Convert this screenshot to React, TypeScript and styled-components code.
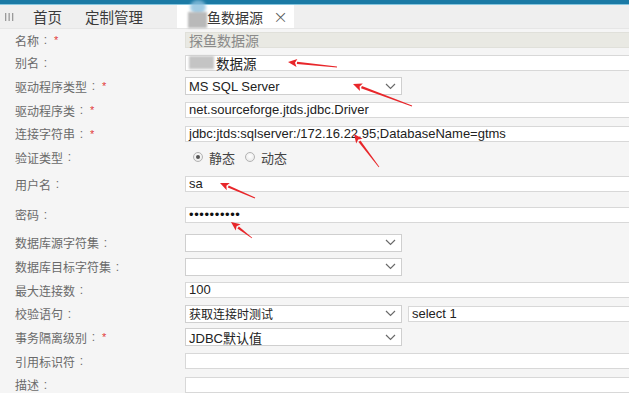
import React from "react";
import styled, { createGlobalStyle } from "styled-components";

const GlobalStyle = createGlobalStyle`
  html, body { margin: 0; padding: 0; background: #f5f5f5; }
  body { font-family: "Liberation Sans", "Noto Sans CJK SC", sans-serif; }
  * { box-sizing: border-box; }
`;

const Page = styled.div`
  position: relative;
  width: 629px;
  height: 393px;
  overflow: hidden;
  background: #f5f5f5;
`;

const TopStripe = styled.div`
  height: 5px;
  background: #1b7aa5;
  border-bottom: 1px solid #86c6df;
`;

const TabBar = styled.div`
  display: flex;
  align-items: stretch;
  height: 24px;
  background: #efefef;
  border-bottom: 1px solid #e6e6e6;
  padding-left: 5px;
`;

const MenuIcon = styled.div`
  width: 28px;
  display: flex;
  align-items: center;
`;

const Tab = styled.div<{ $w: number }>`
  width: ${(p) => p.$w}px;
  display: flex;
  align-items: center;
  font-size: 14.5px;
  color: #3a3a3a;
  font-family: "Noto Sans CJK SC", sans-serif;
`;

const ActiveTab = styled.div`
  position: relative;
  width: 117px;
  display: flex;
  align-items: center;
  padding-left: 11px;
  background: #fff;
  font-size: 14px;
  color: #3a3a3a;
  font-family: "Noto Sans CJK SC", sans-serif;
`;

const TabBlur = styled.span`
  align-self: flex-end;
  width: 19px;
  height: 16px;
  background: #b9b9b9;
  filter: blur(1.2px);
`;

const TabGlow = styled.span`
  position: absolute;
  left: 13px;
  top: -5px;
  width: 16px;
  height: 14px;
  border-radius: 50%;
  background: #8cc0de;
  filter: blur(1.5px);
  opacity: 0.8;
`;

const CloseMark = styled.span`
  margin-left: 10px;
  font-size: 18px;
  font-weight: 300;
  color: #5a5a5a;
  font-family: "DejaVu Sans", sans-serif;
  line-height: 1;
`;

const Form = styled.div`
  display: flex;
  flex-direction: column;
`;

const Row = styled.div<{ $h: number }>`
  height: ${(p) => p.$h}px;
  display: grid;
  grid-template-columns: 185px 1fr;
  align-items: center;
`;

const Label = styled.div`
  display: flex;
  align-items: center;
  padding-left: 15px;
  font-size: 12px;
  color: #6a6a6a;
  white-space: nowrap;
  font-family: "Noto Sans CJK SC", sans-serif;
`;

const Colon = styled.span`
  display: inline-block;
  width: 13px;
  text-align: center;
  font-family: "Liberation Sans", sans-serif;
`;

const Req = styled.span`
  color: #e23b3b;
  font-size: 11px;
  margin-left: 2px;
  font-family: "Liberation Sans", sans-serif;
`;

const Field = styled.div`
  display: flex;
  align-items: center;
  gap: 6px;
`;

const TextBox = styled.div<{ $readonly?: boolean }>`
  flex: 0 0 auto;
  width: 460px;
  height: 16px;
  display: flex;
  align-items: center;
  padding: 0 3px;
  border: 1px solid ${(p) => (p.$readonly ? "#e0e0da" : "#d8d8d8")};
  background: ${(p) => (p.$readonly ? "#e9e9e3" : "#ffffff")};
  color: ${(p) => (p.$readonly ? "#8a8a8a" : "#222")};
  font-size: 13px;
  line-height: 14px;
  white-space: nowrap;
`;

const Cjk = styled.span<{ $size?: number }>`
  font-family: "Noto Sans CJK SC", sans-serif;
  font-size: ${(p) => p.$size ?? 13}px;
  color: inherit;
`;

const Dots = styled.span`
  letter-spacing: 0.6px;
  font-size: 13px;
  color: #111;
`;

const BlurBlock = styled.span`
  width: 25px;
  height: 13px;
  margin-right: 2px;
  background: #c4c4c4;
  filter: blur(1.2px);
`;

const SelectBox = styled.div`
  flex: 0 0 auto;
  width: 217px;
  height: 18px;
  display: flex;
  align-items: center;
  justify-content: space-between;
  padding: 0 5px 0 3px;
  border: 1px solid #cfcfcf;
  background: #fff;
  color: #222;
  font-size: 13px;
  white-space: nowrap;
`;

const RadioGroup = styled.div`
  display: flex;
  align-items: center;
  padding-left: 8px;
  font-size: 13px;
  color: #444;
  font-family: "Noto Sans CJK SC", sans-serif;
`;

const RadioDot = styled.span<{ $checked?: boolean }>`
  position: relative;
  width: 10px;
  height: 10px;
  border-radius: 50%;
  border: 1px solid #b3b3b3;
  background: radial-gradient(circle at 50% 40%, #ffffff, #e4e4e4);
  margin-right: 6px;
  &::after {
    content: "";
    display: ${(p) => (p.$checked ? "block" : "none")};
    position: absolute;
    left: 2px;
    top: 2px;
    width: 4px;
    height: 4px;
    border-radius: 50%;
    background: #555;
  }
`;

const RadioText = styled.span`
  margin-right: 10px;
`;

const Overlay = styled.svg`
  position: absolute;
  left: 0;
  top: 0;
  pointer-events: none;
`;

const Chevron = () => (
  <svg width="11" height="7" viewBox="0 0 11 7">
    <polyline points="1,1 5.5,5.5 10,1" fill="none" stroke="#6a6a6a" strokeWidth="1.2" />
  </svg>
);

const Bars = () => (
  <svg width="9" height="8" viewBox="0 0 9 8">
    <rect x="0" y="0" width="1.3" height="8" fill="#9a9a9a" />
    <rect x="3.5" y="0" width="1.3" height="8" fill="#9a9a9a" />
    <rect x="7" y="0" width="1.3" height="8" fill="#9a9a9a" />
  </svg>
);

type ArrowProps = { x1: number; y1: number; x2: number; y2: number };

const Arrow = ({ x1, y1, x2, y2 }: ArrowProps) => {
  const dx = x2 - x1;
  const dy = y2 - y1;
  const len = Math.hypot(dx, dy);
  const ux = dx / len;
  const uy = dy / len;
  const nx = -uy;
  const ny = ux;
  const headLen = 9;
  const headW = 4;
  const bx = x2 - ux * headLen;
  const by = y2 - uy * headLen;
  const shaft = [
    [x1 + nx * 0.4, y1 + ny * 0.4],
    [bx + nx * 1.2, by + ny * 1.2],
    [bx - nx * 1.2, by - ny * 1.2],
    [x1 - nx * 0.4, y1 - ny * 0.4],
  ];
  const head = [
    [x2, y2],
    [bx + nx * headW, by + ny * headW],
    [bx + ux * 2, by + uy * 2],
    [bx - nx * headW, by - ny * headW],
  ];
  const pts = (a: number[][]) => a.map((p) => `${p[0].toFixed(1)},${p[1].toFixed(1)}`).join(" ");
  return (
    <g fill="#e8262a">
      <polygon points={pts(shaft)} />
      <polygon points={pts(head)} />
    </g>
  );
};

const arrows: ArrowProps[] = [
  { x1: 337, y1: 67, x2: 288, y2: 62 },
  { x1: 412, y1: 106, x2: 353, y2: 84 },
  { x1: 379, y1: 167, x2: 354, y2: 134 },
  { x1: 255, y1: 198, x2: 220, y2: 183 },
  { x1: 252, y1: 238, x2: 231, y2: 222 },
];

const FieldLabel = ({ text, req }: { text: string; req?: boolean }) => (
  <Label>
    {text}
    <Colon>:</Colon>
    {req && <Req>*</Req>}
  </Label>
);

export default function App() {
  return (
    <Page>
      <GlobalStyle />
      <TopStripe />
      <TabBar>
        <MenuIcon>
          <Bars />
        </MenuIcon>
        <Tab $w={52}>首页</Tab>
        <Tab $w={92}>定制管理</Tab>
        <ActiveTab>
          <TabGlow />
          <TabBlur />
          鱼数据源
          <CloseMark>×</CloseMark>
        </ActiveTab>
      </TabBar>
      <Form>
        <Row $h={22}>
          <FieldLabel text="名称" req />
          <Field>
            <TextBox $readonly>
              <Cjk $size={14}>探鱼数据源</Cjk>
            </TextBox>
          </Field>
        </Row>
        <Row $h={23}>
          <FieldLabel text="别名" />
          <Field>
            <TextBox>
              <BlurBlock />
              <Cjk $size={13.5}>数据源</Cjk>
            </TextBox>
          </Field>
        </Row>
        <Row $h={24}>
          <FieldLabel text="驱动程序类型" req />
          <Field>
            <SelectBox>
              MS SQL Server
              <Chevron />
            </SelectBox>
          </Field>
        </Row>
        <Row $h={24}>
          <FieldLabel text="驱动程序类" req />
          <Field>
            <TextBox>net.sourceforge.jtds.jdbc.Driver</TextBox>
          </Field>
        </Row>
        <Row $h={23}>
          <FieldLabel text="连接字符串" req />
          <Field>
            <TextBox>jdbc:jtds:sqlserver:/172.16.22.95;DatabaseName=gtms</TextBox>
          </Field>
        </Row>
        <Row $h={24}>
          <FieldLabel text="验证类型" />
          <RadioGroup>
            <RadioDot $checked />
            <RadioText>静态</RadioText>
            <RadioDot />
            <RadioText>动态</RadioText>
          </RadioGroup>
        </Row>
        <Row $h={30}>
          <FieldLabel text="用户名" />
          <Field>
            <TextBox>sa</TextBox>
          </Field>
        </Row>
        <Row $h={31}>
          <FieldLabel text="密码" />
          <Field>
            <TextBox>
              <Dots>••••••••••</Dots>
            </TextBox>
          </Field>
        </Row>
        <Row $h={25}>
          <FieldLabel text="数据库源字符集" />
          <Field>
            <SelectBox>
              <span />
              <Chevron />
            </SelectBox>
          </Field>
        </Row>
        <Row $h={23}>
          <FieldLabel text="数据库目标字符集" />
          <Field>
            <SelectBox>
              <span />
              <Chevron />
            </SelectBox>
          </Field>
        </Row>
        <Row $h={24}>
          <FieldLabel text="最大连接数" />
          <Field>
            <TextBox>100</TextBox>
          </Field>
        </Row>
        <Row $h={23}>
          <FieldLabel text="校验语句" />
          <Field>
            <SelectBox>
              <Cjk $size={12}>获取连接时测试</Cjk>
              <Chevron />
            </SelectBox>
            <TextBox>select 1</TextBox>
          </Field>
        </Row>
        <Row $h={24}>
          <FieldLabel text="事务隔离级别" req />
          <Field>
            <SelectBox>
              <span>
                JDBC<Cjk>默认值</Cjk>
              </span>
              <Chevron />
            </SelectBox>
          </Field>
        </Row>
        <Row $h={24}>
          <FieldLabel text="引用标识符" />
          <Field>
            <TextBox />
          </Field>
        </Row>
        <Row $h={23}>
          <FieldLabel text="描述" />
          <Field>
            <TextBox />
          </Field>
        </Row>
      </Form>
      <Overlay width="629" height="393" viewBox="0 0 629 393">
        {arrows.map((a, i) => (
          <Arrow key={i} {...a} />
        ))}
      </Overlay>
    </Page>
  );
}
